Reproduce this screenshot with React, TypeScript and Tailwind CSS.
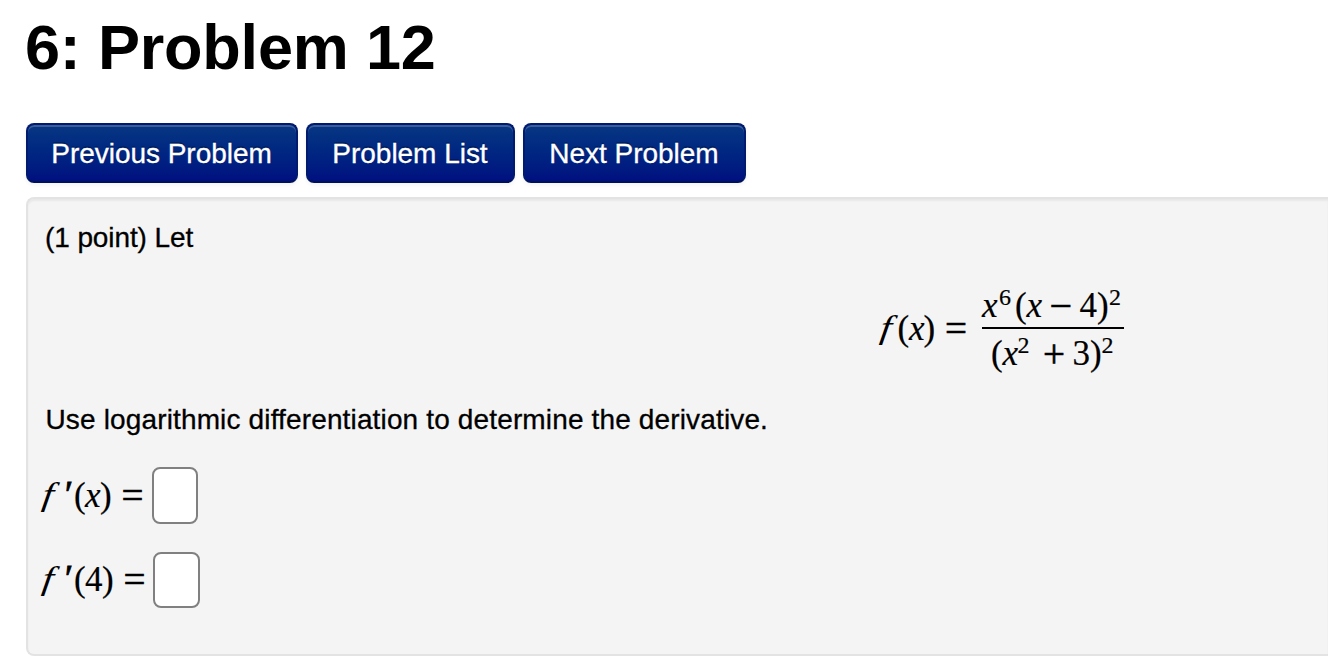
import type { ReactNode } from "react";
import clsx from "clsx";

type GlyphProps = {
  className: string;
  italic?: boolean;
  children: ReactNode;
};

const Glyph = ({ className, italic, children }: GlyphProps) => (
  <span
    className={clsx(
      "inline-block shrink-0 whitespace-nowrap",
      italic && "italic",
      className
    )}
  >
    {children}
  </span>
);

// the function name is set wider than the font's own italic f
const Func = ({ className }: { className: string }) => (
  <span className={clsx("inline-block shrink-0", className)}>
    <span className="inline-block origin-left -translate-x-[3.5px] -translate-y-px scale-x-115 scale-y-93 -skew-x-6 italic [-webkit-text-stroke:0]">
      f
    </span>
  </span>
);

const Equals = () => (
  <Glyph className="translate-y-[2px] text-[39px] [-webkit-text-stroke:0.6px_black]">
    =
  </Glyph>
);

const Prime = () => (
  <Glyph
    italic
    className="w-[10.5px] -translate-x-px text-[38px] [-webkit-text-stroke:0.8px_black]"
  >
    ′
  </Glyph>
);

const Sup = ({ className, children }: GlyphProps) => (
  <span
    className={clsx(
      "inline-block shrink-0 -translate-y-[12px] text-[24px]",
      className
    )}
  >
    {children}
  </span>
);

const mathRow =
  "flex h-10 items-baseline font-['Liberation_Serif',serif] text-[35px] leading-10 text-black [-webkit-text-stroke:0.2px_black]";

const NavButton = ({
  className,
  children,
}: {
  className: string;
  children: ReactNode;
}) => (
  <button
    className={clsx(
      "h-[60px] whitespace-nowrap rounded-lg border-2 border-[#001a70] border-b-[#001257] bg-linear-to-b from-[#0a3782] to-[#000c80] bg-origin-border pt-[2px] pr-px text-center text-[28px] leading-[54px] tracking-[-0.03px] text-white [-webkit-text-stroke:0.3px_white]",
      "shadow-[inset_0_2px_0_rgba(255,255,255,0.2),0_2px_4px_rgba(0,0,0,0.05)] [text-shadow:0_-2px_0_rgba(0,0,0,0.25)]",
      className
    )}
  >
    {children}
  </button>
);

const Equation = () => (
  <div className="ml-[856px] mt-[23px] flex h-[97px]">
    <div className={clsx(mathRow, "mt-[26px] w-[98px]")}>
      <Func className="w-[13.5px]" />
      <Glyph className="w-[11.5px]">(</Glyph>
      <Glyph italic className="w-[14.5px]">x</Glyph>
      <Glyph className="w-[21.5px]">)</Glyph>
      <Equals />
    </div>
    <div className="w-[142px]">
      <div className={clsx(mathRow, "mt-[3px]")}>
        <Glyph italic className="w-[17px]">x</Glyph>
        <Sup className="w-[16px]">6</Sup>
        <Glyph className="w-[11.5px]">(</Glyph>
        <Glyph italic className="w-[23px]">x</Glyph>
        <Glyph className="w-[30px] translate-y-[2px] text-[40px] [-webkit-text-stroke:0.6px_black]">
          −
        </Glyph>
        <Glyph className="w-[17.5px]">4</Glyph>
        <Glyph className="w-[12px]">)</Glyph>
        <Sup className="w-[12px]">2</Sup>
      </div>
      <div className="mt-[3px] h-[2px] bg-black" />
      <div className={clsx(mathRow, "mt-[3px] pl-[9px]")}>
        <Glyph className="w-[11.5px]">(</Glyph>
        <Glyph italic className="w-[15px]">x</Glyph>
        <Sup className="w-[25.5px]">2</Sup>
        <Glyph className="w-[29.5px] translate-y-[2px] text-[39px] [-webkit-text-stroke:0.6px_black]">
          +
        </Glyph>
        <Glyph className="w-[17.5px]">3</Glyph>
        <Glyph className="w-[11.5px]">)</Glyph>
        <Sup className="w-[12px]">2</Sup>
      </div>
    </div>
  </div>
);

export default function App() {
  return (
    <main className="h-[666px] w-full overflow-hidden bg-white pl-[26px] font-['Liberation_Sans',Arial,sans-serif] text-black">
      <h1 className="-ml-px pt-[11px] text-[63px] leading-[72px] font-bold tracking-[-0.2px]">
        6: Problem 12
      </h1>
      <nav className="mt-10 flex gap-2">
        <NavButton className="w-[272px]">Previous Problem</NavButton>
        <NavButton className="w-[209px]">Problem List</NavButton>
        <NavButton className="w-[223px]">Next Problem</NavButton>
      </nav>

      <section className="mt-[14px] h-[459px] rounded-l-lg border-2 border-r-0 border-[#e3e3e3] bg-[#f4f4f4] shadow-[inset_0_2px_2px_rgba(0,0,0,0.05)]">
        <p className="pl-[17px] pt-[19px] text-[28px] leading-10 tracking-[-0.1px] [-webkit-text-stroke:0.3px_black]">
          (1 point) Let
        </p>
        <Equation />
        <p className="mt-[22px] pl-[17.5px] text-[28px] leading-10 tracking-[0.145px] [-webkit-text-stroke:0.3px_black]">
          Use logarithmic differentiation to determine the derivative.
        </p>

        <div className="mt-[27px] flex h-[57px]">
          <div className={clsx(mathRow, "mt-[7px] w-[124px] pl-[17.5px]")}>
            <Func className="w-[18px]" />
            <Prime />
            <Glyph className="w-[11px]">(</Glyph>
            <Glyph italic className="w-[15px]">x</Glyph>
            <Glyph className="w-[21.5px]">)</Glyph>
            <Equals />
          </div>
          <input className="h-[57px] w-[46px] rounded-lg border-2 border-[#808080] bg-white" />
        </div>
        <div className="mt-7 flex h-[56px]">
          <div className={clsx(mathRow, "mt-[6px] w-[125px] pl-[17.5px]")}>
            <Func className="w-[18px]" />
            <Prime />
            <Glyph className="w-[11px]">(</Glyph>
            <Glyph className="w-[17px]">4</Glyph>
            <Glyph className="w-[21.5px]">)</Glyph>
            <Equals />
          </div>
          <input className="h-[56px] w-[47px] rounded-lg border-2 border-[#808080] bg-white" />
        </div>
      </section>
    </main>
  );
}
